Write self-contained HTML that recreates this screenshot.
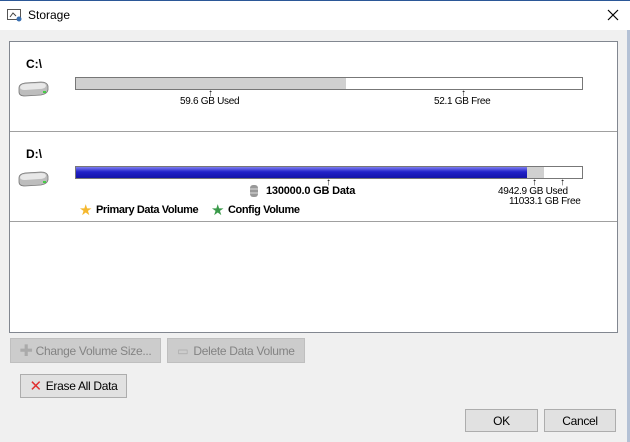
<!DOCTYPE html>
<html><head><style>
body{margin:0;width:630px;height:442px;overflow:hidden;background:#f0f0f0;font-family:"Liberation Sans",sans-serif;position:relative}
.a{position:absolute}
.t{font-size:11px;color:#000;white-space:nowrap}
.b{font-weight:bold}
.btn{position:absolute;border:1px solid #adadad;background:#e1e1e1;font-size:12px;box-sizing:border-box;display:flex;align-items:center;justify-content:center;letter-spacing:-.3px}
.dis{background:#cccccc;border-color:#bfbfbf;color:#838383}
.drive{position:absolute;width:32px;height:18px}
</style></head><body>
<div class="a" style="left:0;top:0;width:630px;height:30px;background:#fff;border-top:1px solid #2b5797;box-sizing:border-box"></div>
<svg class="a" style="left:7px;top:9px" width="16" height="13"><rect x="0.5" y="0.5" width="13" height="10" fill="#fff" stroke="#555"/><path d="M3 8l3-4 3 3" stroke="#444" fill="none"/><circle cx="12" cy="10" r="2.5" fill="#3a6fb0"/></svg>
<div class="a" style="left:28px;top:8px;font-size:12px">Storage</div>
<svg class="a" style="left:607px;top:9px" width="12" height="12"><path d="M1 1L11 11M11 1L1 11" stroke="#000" stroke-width="1.2"/></svg>
<div class="a" style="left:627px;top:30px;width:3px;height:412px;background:#2b5797;opacity:.3"></div>
<div class="a" style="left:9px;top:41px;width:609px;height:292px;background:#fff;border:1px solid #828790;box-sizing:border-box"></div>
<div class="a" style="left:10px;top:131px;width:607px;height:1px;background:#a0a0a0"></div>
<div class="a" style="left:10px;top:221px;width:607px;height:1px;background:#a0a0a0"></div>

<div class="a t b" style="left:26px;top:57px;font-size:12px">C:\</div>
<svg class="drive" style="left:17px;top:80px" viewBox="0 0 32 18"><path d="M2 8Q2 4 8 3L24 2Q30 2 31 6V10Q30 14 24 15L8 16Q2 16 2 12Z" fill="#bdbdbd" stroke="#777" stroke-width=".8"/><path d="M3 7Q4 4 9 4L24 3Q29 3 29 6Q28 9 22 9L8 10Q3 10 3 7Z" fill="#e8e8e8"/><rect x="26" y="11" width="3" height="2" fill="#4c4"/></svg>
<div class="a" style="left:75px;top:77px;width:508px;height:13px;border:1px solid #777;box-sizing:border-box;background:#fff"><div style="width:270px;height:100%;background:#d0d0d0"></div></div>
<div class="a t" style="left:208px;top:88px;font-size:10px">↑</div>
<div class="a t" style="left:461px;top:88px;font-size:10px">↑</div>
<div class="a t" style="left:180px;top:96px;font-size:10px;letter-spacing:-.3px">59.6 GB Used</div>
<div class="a t" style="left:434px;top:96px;font-size:10px;letter-spacing:-.3px">52.1 GB Free</div>

<div class="a t b" style="left:26px;top:147px;font-size:12px">D:\</div>
<svg class="drive" style="left:17px;top:170px" viewBox="0 0 32 18"><path d="M2 8Q2 4 8 3L24 2Q30 2 31 6V10Q30 14 24 15L8 16Q2 16 2 12Z" fill="#bdbdbd" stroke="#777" stroke-width=".8"/><path d="M3 7Q4 4 9 4L24 3Q29 3 29 6Q28 9 22 9L8 10Q3 10 3 7Z" fill="#e8e8e8"/><rect x="26" y="11" width="3" height="2" fill="#4c4"/></svg>
<div class="a" style="left:75px;top:166px;width:508px;height:13px;border:1px solid #777;box-sizing:border-box;background:#fff;display:flex"><div style="width:451px;height:100%;background:linear-gradient(#7c7cf0,#2222c8 45%,#1515a8)"></div><div style="width:17px;background:#d0d0d0"></div></div>
<div class="a t" style="left:326px;top:177px;font-size:10px">↑</div>
<div class="a t" style="left:532px;top:177px;font-size:10px">↑</div>
<div class="a t" style="left:560px;top:177px;font-size:10px">↑</div>
<svg class="a" style="left:249px;top:184px" width="10" height="14"><rect x="1" y="1" width="8" height="12" rx="3" fill="#999"/><path d="M1 5h8M1 9h8" stroke="#ddd"/></svg>
<div class="a t b" style="left:266px;top:185px;letter-spacing:-.2px">130000.0 GB Data</div>
<div class="a t" style="left:498px;top:186px;font-size:10px;letter-spacing:-.3px">4942.9 GB Used</div>
<div class="a t" style="left:509px;top:196px;font-size:10px;letter-spacing:-.3px">11033.1 GB Free</div>
<div class="a" style="left:79px;top:201px;font-size:15px;color:#f5b82e">★</div>
<div class="a t b" style="left:96px;top:204px;letter-spacing:-.4px">Primary Data Volume</div>
<div class="a" style="left:211px;top:201px;font-size:15px;color:#3a9a4a">★</div>
<div class="a t b" style="left:228px;top:204px;letter-spacing:-.4px">Config Volume</div>

<div class="btn dis" style="left:10px;top:338px;width:151px;height:25px"><span style="color:#aaa;font-size:16px;margin-right:3px">✚</span>Change Volume Size...</div>
<div class="btn dis" style="left:167px;top:338px;width:138px;height:25px"><span style="color:#aaa;margin-right:5px">▭</span>Delete Data Volume</div>
<div class="btn" style="left:20px;top:374px;width:107px;height:24px"><span style="color:#e03030;font-size:15px;margin-right:4px">✕</span>Erase All Data</div>
<div class="btn" style="left:465px;top:409px;width:73px;height:23px">OK</div>
<div class="btn" style="left:544px;top:409px;width:72px;height:23px">Cancel</div>
</body></html>
